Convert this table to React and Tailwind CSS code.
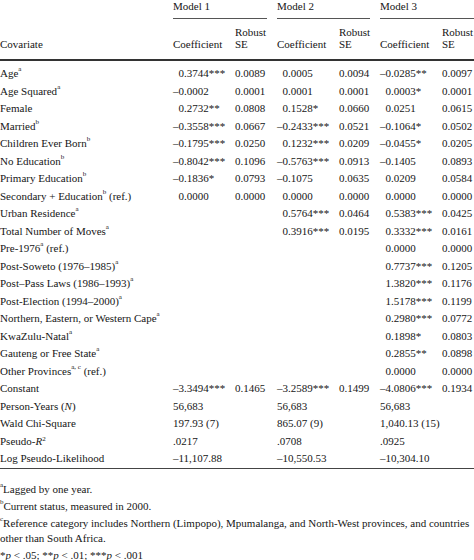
import React from 'react';

const Sup = ({ children }) => (
  <sup className="text-[7px] relative -top-[1px] leading-none align-super">{children}</sup>
);

// chaque ligne : libellé + [coef, se] par modèle (null = vide)
const rows = [
  { label: <>Age<Sup>a</Sup></>, v: [['0.3744***', '0.0089'], ['0.0005', '0.0094'], ['–0.0285**', '0.0097']] },
  { label: <>Age Squared<Sup>a</Sup></>, v: [['–0.0002', '0.0001'], ['0.0001', '0.0001'], ['0.0003*', '0.0001']] },
  { label: <>Female</>, v: [['0.2732**', '0.0808'], ['0.1528*', '0.0660'], ['0.0251', '0.0615']] },
  { label: <>Married<Sup>b</Sup></>, v: [['–0.3558***', '0.0667'], ['–0.2433***', '0.0521'], ['–0.1064*', '0.0502']] },
  { label: <>Children Ever Born<Sup>b</Sup></>, v: [['–0.1795***', '0.0250'], ['0.1232***', '0.0209'], ['–0.0455*', '0.0205']] },
  { label: <>No Education<Sup>b</Sup></>, v: [['–0.8042***', '0.1096'], ['–0.5763***', '0.0913'], ['–0.1405', '0.0893']] },
  { label: <>Primary Education<Sup>b</Sup></>, v: [['–0.1836*', '0.0793'], ['–0.1075', '0.0635'], ['0.0209', '0.0584']] },
  { label: <>Secondary + Education<Sup>b</Sup> (ref.)</>, v: [['0.0000', '0.0000'], ['0.0000', '0.0000'], ['0.0000', '0.0000']] },
  { label: <>Urban Residence<Sup>a</Sup></>, v: [null, ['0.5764***', '0.0464'], ['0.5383***', '0.0425']] },
  { label: <>Total Number of Moves<Sup>a</Sup></>, v: [null, ['0.3916***', '0.0195'], ['0.3332***', '0.0161']] },
  { label: <>Pre-1976<Sup>a</Sup> (ref.)</>, v: [null, null, ['0.0000', '0.0000']] },
  { label: <>Post-Soweto (1976–1985)<Sup>a</Sup></>, v: [null, null, ['0.7737***', '0.1205']] },
  { label: <>Post–Pass Laws (1986–1993)<Sup>a</Sup></>, v: [null, null, ['1.3820***', '0.1176']] },
  { label: <>Post-Election (1994–2000)<Sup>a</Sup></>, v: [null, null, ['1.5178***', '0.1199']] },
  { label: <>Northern, Eastern, or Western Cape<Sup>a</Sup></>, v: [null, null, ['0.2980***', '0.0772']] },
  { label: <>KwaZulu-Natal<Sup>a</Sup></>, v: [null, null, ['0.1898*', '0.0803']] },
  { label: <>Gauteng or Free State<Sup>a</Sup></>, v: [null, null, ['0.2855**', '0.0898']] },
  { label: <>Other Provinces<Sup>a, c</Sup> (ref.)</>, v: [null, null, ['0.0000', '0.0000']] },
  { label: <>Constant</>, v: [['–3.3494***', '0.1465'], ['–3.2589***', '0.1499'], ['–4.0806***', '0.1934']] },
];

const stats = [
  { label: <>Person-Years (<i>N</i>)</>, v: ['56,683', '56,683', '56,683'] },
  { label: <>Wald Chi-Square</>, v: ['197.93 (7)', '865.07 (9)', '1,040.13 (15)'] },
  { label: <>Pseudo-<i>R</i><sup className="text-[7px] leading-none">2</sup></>, v: ['.0217', '.0708', '.0925'] },
  { label: <>Log Pseudo-Likelihood</>, v: ['–11,107.88', '–10,550.53', '–10,304.10'] },
];

const cols = 'grid grid-cols-[173px_62px_42px_62px_41px_62px_32px]';

function Coef({ value }) {
  if (!value) return <div />;
  const neg = value.startsWith('–');
  return <div className={`whitespace-nowrap ${neg ? '' : 'pl-[5.5px]'}`}>{value}</div>;
}

export default function App() {
  return (
    <div className="w-[474px] h-[560px] overflow-hidden bg-white text-[#161616] font-['Liberation_Serif',serif] text-[11px]">
      {/* en-tête des modèles */}
      <div className={`${cols} h-[19px]`}>
        <div />
        <div className="col-span-2 pr-[10px]">
          <div className="h-full border-b-[1.5px] border-[#555] leading-[12px]">Model 1</div>
        </div>
        <div className="col-span-2 pr-[10px]">
          <div className="h-full border-b-[1.5px] border-[#555] leading-[12px]">Model 2</div>
        </div>
        <div className="col-span-2">
          <div className="h-full border-b-[1.5px] border-[#555] leading-[12px]">Model 3</div>
        </div>
      </div>

      <div className="border-b-2 border-[#333]">
        <div className={`${cols} h-[40px] items-end pb-[9px] leading-[12px] whitespace-nowrap`}>
          <div>Covariate</div>
          <div>Coefficient</div>
          <div>Robust<br />SE</div>
          <div>Coefficient</div>
          <div>Robust<br />SE</div>
          <div>Coefficient</div>
          <div>Robust<br />SE</div>
        </div>
      </div>

      {/* corps du tableau */}
      <div className="pt-[4px] border-b-[1.5px] border-[#444]">
        {rows.map((r, i) => (
          <div key={i} className={`${cols} h-[17.5px] leading-[17.5px] whitespace-nowrap`}>
            <div>{r.label}</div>
            {r.v.map((m, j) => (
              <React.Fragment key={j}>
                <Coef value={m ? m[0] : null} />
                <div>{m ? m[1] : ''}</div>
              </React.Fragment>
            ))}
          </div>
        ))}
        {stats.map((s, i) => (
          <div key={i} className={`${cols} h-[17.5px] leading-[17.5px] whitespace-nowrap`}>
            <div>{s.label}</div>
            {s.v.map((x, j) => (
              <div key={j} className="col-span-2">{x}</div>
            ))}
          </div>
        ))}
      </div>

      {/* notes */}
      <div className="pt-[13px] leading-[15px] whitespace-nowrap flex flex-col gap-[2px]">
        <p><Sup>a</Sup>Lagged by one year.</p>
        <p><Sup>b</Sup>Current status, measured in 2000.</p>
        <p>
          <Sup>c</Sup>Reference category includes Northern (Limpopo), Mpumalanga, and North-West provinces, and countries
          <br />other than South Africa.
        </p>
        <p>*<i>p</i> &lt; .05; **<i>p</i> &lt; .01; ***<i>p</i> &lt; .001</p>
      </div>
    </div>
  );
}
